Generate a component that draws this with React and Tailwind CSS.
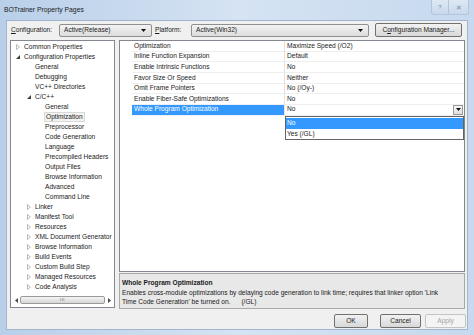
import React from "react";

const FONT = { fontFamily: '"Liberation Sans", Arial, sans-serif' };

const treeItems = [
  { t: "Common Properties", lvl: 0, arrow: "closed" },
  { t: "Configuration Properties", lvl: 0, arrow: "open" },
  { t: "General", lvl: 1 },
  { t: "Debugging", lvl: 1 },
  { t: "VC++ Directories", lvl: 1 },
  { t: "C/C++", lvl: 1, arrow: "open" },
  { t: "General", lvl: 2 },
  { t: "Optimization", lvl: 2, selected: true },
  { t: "Preprocessor", lvl: 2 },
  { t: "Code Generation", lvl: 2 },
  { t: "Language", lvl: 2 },
  { t: "Precompiled Headers", lvl: 2 },
  { t: "Output Files", lvl: 2 },
  { t: "Browse Information", lvl: 2 },
  { t: "Advanced", lvl: 2 },
  { t: "Command Line", lvl: 2 },
  { t: "Linker", lvl: 1, arrow: "closed" },
  { t: "Manifest Tool", lvl: 1, arrow: "closed" },
  { t: "Resources", lvl: 1, arrow: "closed" },
  { t: "XML Document Generator", lvl: 1, arrow: "closed" },
  { t: "Browse Information", lvl: 1, arrow: "closed" },
  { t: "Build Events", lvl: 1, arrow: "closed" },
  { t: "Custom Build Step", lvl: 1, arrow: "closed" },
  { t: "Managed Resources", lvl: 1, arrow: "closed" },
  { t: "Code Analysis", lvl: 1, arrow: "closed" },
];

const props = [
  ["Optimization", "Maximize Speed (/O2)"],
  ["Inline Function Expansion", "Default"],
  ["Enable Intrinsic Functions", "No"],
  ["Favor Size Or Speed", "Neither"],
  ["Omit Frame Pointers", "No (/Oy-)"],
  ["Enable Fiber-Safe Optimizations", "No"],
  ["Whole Program Optimization", "No"],
];

const indent = ["pl-[4px]", "pl-[15px]", "pl-[25px]"];

function Arrow({ kind }) {
  if (kind === "open") {
    return (
      <svg width="4" height="4" viewBox="0 0 4 4">
        <path d="M4 0 L4 4 L0 4 Z" fill="#3c3c3c" />
      </svg>
    );
  }
  if (kind === "closed") {
    return (
      <svg width="4" height="6" viewBox="0 0 4 6">
        <path d="M0.5 0.5 L3.4 3 L0.5 5.5 Z" fill="none" stroke="#a8a8a8" strokeWidth="0.8" />
      </svg>
    );
  }
  return null;
}

function DownTri() {
  return (
    <svg width="5" height="3" viewBox="0 0 5 3">
      <path d="M0 0 L5 0 L2.5 3 Z" fill="#111" />
    </svg>
  );
}

function Combo({ text, w }) {
  return (
    <div
      className={`${w} h-[13px] flex items-center justify-between pl-[4px] pr-[5px] border border-[#8e8f8f] rounded-[2px] bg-gradient-to-b from-[#f3f3f3] to-[#dcdcdc] text-[#222]`}
    >
      <span>{text}</span>
      <DownTri />
    </div>
  );
}

function Btn({ children, w, disabled }) {
  return (
    <div
      className={`${w} h-[14px] flex items-center justify-center rounded-[2px] border ${
        disabled
          ? "border-[#c4c4c4] text-[#a3a3a3] bg-[#f4f4f4]"
          : "border-[#707070] text-[#1a1a1a] bg-gradient-to-b from-[#f2f2f2] to-[#d8d8d8]"
      }`}
    >
      {children}
    </div>
  );
}

export default function App() {
  return (
    <div
      style={FONT}
      className="w-[474px] h-[335px] overflow-hidden relative bg-gradient-to-r from-[#b9cfe9] via-[#d5e3f3] to-[#c6d9ee] text-[6.6px] leading-none"
    >
      {/* title bar */}
      <div className="h-[20px] flex items-center pl-[4px] relative">
        <span className="text-[6.8px] text-[#1b1b1b]">BOTrainer Property Pages</span>
        <div className="absolute right-[5px] top-0 flex">
          <div className="w-[18px] h-[15px] flex items-center justify-center rounded-bl-[3px] border border-t-0 border-[#b3c5dc] bg-gradient-to-b from-[#dde8f4] to-[#c9d9ec] text-[6px] text-[#7a8aa0]">
            ?
          </div>
          <div className="w-[20px] h-[15px] flex items-center justify-center rounded-br-[3px] border border-t-0 border-l-0 border-[#b3c5dc] bg-gradient-to-b from-[#dde8f4] to-[#c9d9ec] text-[7px] text-[#7a8aa0]">
            ✕
          </div>
        </div>
      </div>

      {/* dialog body */}
      <div className="mx-[6px] h-[310px] bg-[#f0f0f0] border border-[#a3b5cd] flex flex-col">
        {/* configuration row */}
        <div className="mt-[2px] h-[14px] flex items-center pl-[4px] text-[#1a1a1a]">
          <span className="w-[48px]">
            <span className="underline">C</span>onfiguration:
          </span>
          <Combo text="Active(Release)" w="w-[93px]" />
          <span className="ml-[3px] w-[36px]">
            <span className="underline">P</span>latform:
          </span>
          <Combo text="Active(Win32)" w="w-[178px]" />
          <div className="ml-[6px]">
            <Btn w="w-[87px]">
              C<span className="underline">o</span>nfiguration Manager...
            </Btn>
          </div>
        </div>

        {/* main content */}
        <div className="mt-[3px] flex h-[269px]">
          {/* tree */}
          <div className="ml-[3px] w-[105px] h-[268px] bg-white border border-[#828790] flex flex-col">
            <div className="flex-1 pt-[1px] overflow-hidden">
              {treeItems.map((it, i) => (
                <div key={i} className={`h-[10px] flex items-center ${indent[it.lvl]} whitespace-nowrap`}>
                  <span className="w-[9px] flex items-center pl-[1px]">
                    <Arrow kind={it.arrow} />
                  </span>
                  <span
                    className={
                      it.selected
                        ? "-ml-[1px] px-[1px] h-[10px] flex items-center bg-[#f3f3f3] border border-[#d9d9d9] text-[#1a1a1a]"
                        : "text-[#1a1a1a]"
                    }
                  >
                    {it.t}
                  </span>
                </div>
              ))}
            </div>
            {/* horizontal scrollbar */}
            <div className="h-[10px] mb-[2px] flex items-center px-[1px]">
              <div className="w-[8px] flex justify-center">
                <svg width="3" height="5" viewBox="0 0 3 5">
                  <path d="M3 0 L3 5 L0 2.5 Z" fill="#4a4a4a" />
                </svg>
              </div>
              <div className="flex-1 h-[8px] rounded-[2px] border border-[#9a9a9a] bg-gradient-to-b from-[#f4f4f4] to-[#d6d6d6] flex items-center justify-center">
                <span className="text-[4px] tracking-[0.5px] text-[#555]">III</span>
              </div>
              <div className="w-[8px] flex justify-center">
                <svg width="3" height="5" viewBox="0 0 3 5">
                  <path d="M0 0 L0 5 L3 2.5 Z" fill="#4a4a4a" />
                </svg>
              </div>
            </div>
          </div>

          {/* right column */}
          <div className="ml-[4px] w-[346px] flex flex-col">
            <div className="h-[233px] bg-white border border-[#828790] relative">
              {props.map(([name, val], i) => {
                const sel = i === props.length - 1;
                return (
                  <div key={i} className="h-[10.67px] flex">
                    <div className="w-[12px]" />
                    <div
                      className={`w-[152px] flex items-center pl-[2px] whitespace-nowrap border-b border-[#efefef] ${
                        sel ? "bg-[#3399ff] text-white" : "text-[#1a1a1a]"
                      }`}
                    >
                      {name}
                    </div>
                    <div className="w-[1px] bg-[#e2e2e2]" />
                    <div className="flex-1 flex items-center justify-between pl-[2px] border-b border-[#efefef] text-[#1a1a1a]">
                      <span>{val}</span>
                      {sel && (
                        <div className="w-[10px] h-[10px] mr-[1px] flex items-center justify-center border border-[#9a9a9a] bg-gradient-to-b from-[#f7f7f7] to-[#e0e0e0]">
                          <DownTri />
                        </div>
                      )}
                    </div>
                  </div>
                );
              })}

              {/* open dropdown list */}
              <div className="absolute left-[165px] top-[75px] w-[179px] h-[24px] bg-white border border-[#646464] text-[#1a1a1a] py-[0.5px]">
                <div className="h-[11px] flex items-center pl-[1px] bg-[#3399ff] text-white">No</div>
                <div className="h-[11px] flex items-center pl-[1px]">Yes (/GL)</div>
              </div>
            </div>

            {/* description */}
            <div className="mt-[1px] h-[36px] bg-[#e8e8e8] border border-[#a8a8a8] pl-[2px] pt-[4px] text-[#1a1a1a]">
              <div className="font-bold h-[10px] flex items-center">Whole Program Optimization</div>
              <div className="h-[9.5px] flex items-center whitespace-nowrap">
                Enables cross-module optimizations by delaying code generation to link time; requires that linker option 'Link
              </div>
              <div className="h-[9.5px] flex items-center whitespace-pre">
                {"Time Code Generation' be turned on.      (/GL)"}
              </div>
            </div>
          </div>
        </div>

        {/* buttons */}
        <div className="mt-[5px] flex justify-end pr-[1px]">
          <Btn w="w-[34px]">OK</Btn>
          <div className="ml-[12px]">
            <Btn w="w-[41px]">Cancel</Btn>
          </div>
          <div className="ml-[4px]">
            <Btn w="w-[41px]" disabled>
              Apply
            </Btn>
          </div>
        </div>
      </div>
    </div>
  );
}
